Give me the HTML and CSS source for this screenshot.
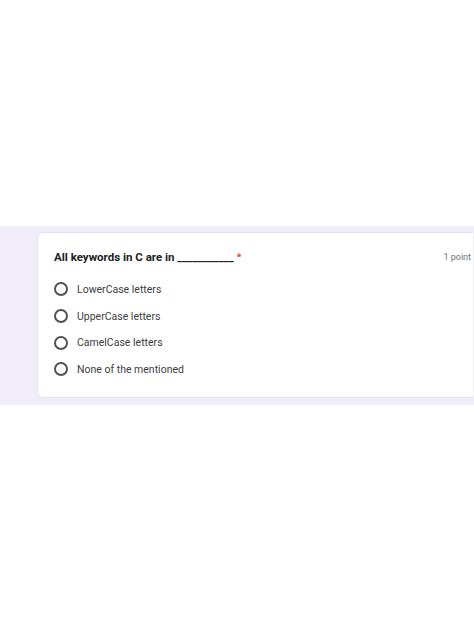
FILE: index.html
```html
<!DOCTYPE html>
<html>
<head>
<meta charset="utf-8">
<link rel="stylesheet" href="styles.css">
</head>
<body>
<div class="page">
  <div class="band">
    <div class="card">
      <div class="head">
        <div class="title">All keywords in C are in ___________ <span class="req">*</span></div>
        <div class="points">1 point</div>
      </div>
      <div class="options">
        <div class="opt"><span class="radio"></span><span class="label">LowerCase letters</span></div>
        <div class="opt"><span class="radio"></span><span class="label">UpperCase letters</span></div>
        <div class="opt"><span class="radio"></span><span class="label">CamelCase letters</span></div>
        <div class="opt"><span class="radio"></span><span class="label">None of the mentioned</span></div>
      </div>
    </div>
  </div>
</div>
</body>
</html>
```

FILE: styles.css
```css
html, body {
  margin: 0;
  padding: 0;
  background: #ffffff;
}
.page {
  width: 474px;
  height: 632px;
  padding-top: 226px;
  box-sizing: border-box;
  font-family: Roboto, "Liberation Sans", Arial, sans-serif;
}
.band {
  background: #f0edf9;
  padding: 6px 1px 7px 37px;
}
.card {
  background: #ffffff;
  border: 1px solid #e6e3ee;
  border-radius: 6px 0 0 6px;
  border-right: none;
  height: 166px;
  box-sizing: border-box;
  padding: 17px 2px 0 16px;
}
.head {
  display: flex;
  justify-content: space-between;
  align-items: flex-start;
}
.title {
  font-size: 11.5px;
  font-weight: 700;
  color: #202124;
  line-height: 14px;
}
.req {
  color: #d93025;
  font-weight: 400;
}
.points {
  font-size: 9px;
  color: #70757a;
  line-height: 14px;
  margin-top: 0;
}
.options {
  display: flex;
  flex-direction: column;
  gap: 12px;
  margin-top: 18px;
}
.opt {
  display: flex;
  align-items: center;
  height: 14.7px;
}
.radio {
  width: 10px;
  height: 10px;
  border: 2px solid #4f5256;
  border-radius: 50%;
  margin-left: 0;
  margin-right: 9px;
  flex-shrink: 0;
}
.label {
  font-size: 10.5px;
  color: #3c4043;
}
```
